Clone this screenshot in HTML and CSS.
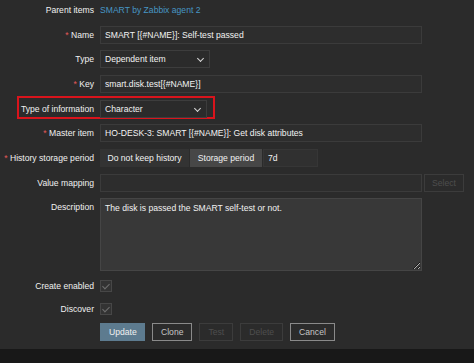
FILE: index.html
```html
<!DOCTYPE html>
<html lang="en">
<head>
    <meta charset="UTF-8">
    <title>Item prototype</title>
    <link rel="stylesheet" href="styles.css">
</head>
<body>
    <div class="form">
        <div class="row">
            <div class="lbl">Parent items</div>
            <div class="fld"><a class="link" href="#">SMART by Zabbix agent 2</a></div>
        </div>
        <div class="row">
            <div class="lbl"><span class="req">*</span> Name</div>
            <div class="fld"><div class="input wide">SMART [{#NAME}]: Self-test passed</div></div>
        </div>
        <div class="row">
            <div class="lbl">Type</div>
            <div class="fld"><div class="input select type-sel">Dependent item<span class="chev"></span></div></div>
        </div>
        <div class="row">
            <div class="lbl"><span class="req">*</span> Key</div>
            <div class="fld"><div class="input wide">smart.disk.test[{#NAME}]</div></div>
        </div>
        <div class="row marked">
            <div class="highlight"></div>
            <div class="lbl">Type of information</div>
            <div class="fld"><div class="input select info-sel">Character<span class="chev"></span></div></div>
        </div>
        <div class="row">
            <div class="lbl"><span class="req">*</span> Master item</div>
            <div class="fld"><div class="input wide">HO-DESK-3: SMART [{#NAME}]: Get disk attributes</div></div>
        </div>
        <div class="row">
            <div class="lbl"><span class="req">*</span> History storage period</div>
            <div class="fld">
                <div class="seg">Do not keep history</div>
                <div class="seg active">Storage period</div>
                <div class="input period">7d</div>
            </div>
        </div>
        <div class="row">
            <div class="lbl">Value mapping</div>
            <div class="fld">
                <div class="input wide"></div>
                <div class="btn disabled select-btn">Select</div>
            </div>
        </div>
        <div class="row tall">
            <div class="lbl">Description</div>
            <div class="fld"><textarea class="textarea" readonly>The disk is passed the SMART self-test or not.</textarea></div>
        </div>
        <div class="row check-row">
            <div class="lbl">Create enabled</div>
            <div class="fld"><span class="check"></span></div>
        </div>
        <div class="row check-row">
            <div class="lbl">Discover</div>
            <div class="fld"><span class="check"></span></div>
        </div>
        <div class="row">
            <div class="lbl"></div>
            <div class="fld buttons">
                <div class="btn primary">Update</div>
                <div class="btn">Clone</div>
                <div class="btn disabled">Test</div>
                <div class="btn disabled">Delete</div>
                <div class="btn">Cancel</div>
            </div>
        </div>
    </div>
    <div class="footer"></div>
</body>
</html>
```

FILE: styles.css
```css
html, body {
    margin: 0;
    padding: 0;
    height: 100%;
}

body {
    background-color: #2b2b2b;
    color: #f2f2f2;
    font-family: "Liberation Sans", Arial, sans-serif;
    font-size: 8.6px;
    display: flex;
    flex-direction: column;
}

.form {
    display: flex;
    flex-direction: column;
    gap: 6.67px;
    padding-top: 1px;
    height: 349px;
    box-sizing: border-box;
}

.row {
    display: flex;
    align-items: center;
    gap: 6px;
    min-height: 18px;
    position: relative;
}

.row.tall {
    align-items: flex-start;
}

.row.tall .lbl {
    padding-top: 4px;
}

.check-row {
    min-height: 16px;
}

.lbl {
    width: 94px;
    flex-shrink: 0;
    text-align: right;
    white-space: nowrap;
    color: #f0f0f0;
}

.req {
    color: #e45959;
}

.fld {
    display: flex;
    align-items: center;
}

.link {
    color: #4796c4;
    text-decoration: none;
}

.input {
    height: 18px;
    box-sizing: border-box;
    border: 1px solid #3b3b3b;
    background-color: #2d2d2d;
    padding: 0 4px;
    line-height: 16px;
    white-space: nowrap;
    overflow: hidden;
}

.wide {
    width: 322px;
}

.select {
    position: relative;
    background-color: #2b2b2b;
    border-color: #3d3d3d;
}

.type-sel {
    width: 110px;
}

.info-sel {
    width: 107px;
}

.chev {
    position: absolute;
    right: 6px;
    top: 5px;
    width: 4px;
    height: 4px;
    border-right: 1px solid #d8d8d8;
    border-bottom: 1px solid #d8d8d8;
    transform: rotate(45deg);
}

/* red annotation box around type of information */
.highlight {
    position: absolute;
    left: 17px;
    top: -3.5px;
    width: 198px;
    height: 23px;
    border: 2px solid #d9141c;
    box-sizing: border-box;
}

.seg {
    height: 18px;
    box-sizing: border-box;
    line-height: 18px;
    background-color: #333333;
    text-align: center;
    border-right: 1px solid #2b2b2b;
}

.seg:first-child {
    width: 90px;
}

.seg.active {
    width: 73px;
    background-color: #474747;
}

.period {
    width: 55px;
    background-color: #303030;
    border-color: #363636;
}

.textarea {
    width: 322px;
    height: 73px;
    box-sizing: border-box;
    margin: 0;
    border: 1px solid #454545;
    background-color: #383838;
    color: #f2f2f2;
    font-family: "Liberation Sans", Arial, sans-serif;
    font-size: 8.6px;
    padding: 4px 4px;
    resize: vertical;
    outline: none;
}

.check {
    display: block;
    width: 12px;
    height: 12px;
    box-sizing: border-box;
    border: 1px solid #474747;
    background-color: #333333;
    position: relative;
}

.check::after {
    content: "";
    position: absolute;
    left: 3px;
    top: 1px;
    width: 3px;
    height: 6px;
    border-right: 1px solid #6f6f6f;
    border-bottom: 1px solid #6f6f6f;
    transform: rotate(45deg);
}

.buttons {
    gap: 7px;
}

.btn {
    height: 18px;
    box-sizing: border-box;
    line-height: 16px;
    border: 1px solid #8a8a8a;
    color: #c6c6c6;
    padding: 0 8px;
    text-align: center;
}

.btn.primary {
    background-color: #5d7b8f;
    border-color: #5d7b8f;
    color: #f0f0f0;
    width: 45px;
}

.btn.disabled {
    border-color: #3c3c3c;
    color: #4e4e4e;
}

.select-btn {
    margin-left: 2px;
    width: 40px;
    padding: 0;
}

.footer {
    flex: 1;
    background-color: #181818;
}
```
